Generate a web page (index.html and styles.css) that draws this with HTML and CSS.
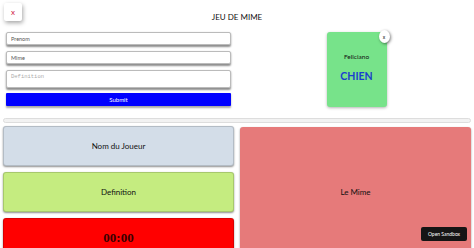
FILE: index.html
```html
<!DOCTYPE html>
<html>
<head>
<meta charset="utf-8">
<link rel="stylesheet" href="styles.css">
</head>
<body>
<header class="header">
  <button class="close-btn">x</button>
  <h1 class="title">JEU DE MIME</h1>
</header>
<section class="top">
  <form class="form">
    <input class="field" type="text" placeholder="Prenom">
    <input class="field" type="text" placeholder="Mime">
    <textarea class="field area" placeholder="Definition"></textarea>
    <button type="button" class="submit">Submit</button>
  </form>
  <div class="cards">
    <div class="card">
      <span class="card-x">x</span>
      <div class="card-name">Feliciano</div>
      <div class="card-word">CHIEN</div>
    </div>
  </div>
</section>
<div class="divider"></div>
<section class="board">
  <div class="col-left">
    <div class="box player">Nom du Joueur</div>
    <div class="box def">Definition</div>
    <div class="box timer">00:00</div>
  </div>
  <div class="box mime">Le Mime</div>
</section>
<button class="sandbox">Open Sandbox</button>
</body>
</html>
```
FILE: styles.css
```css
* { box-sizing: border-box; }
html, body { margin: 0; padding: 0; }
body {
  font-family: "Lato", "Open Sans", sans-serif;
  background: #fff;
  width: 474px;
  height: 248px;
  overflow: hidden;
  position: relative;
  color: #111;
}
.header {
  height: 30px;
  display: flex;
  align-items: center;
  justify-content: center;
  position: relative;
}
.close-btn {
  position: absolute;
  left: 4px;
  top: 3px;
  width: 18px;
  height: 18px;
  border: none;
  background: #fff;
  color: #d0204a;
  font-size: 8px;
  font-family: "Lato", sans-serif;
  padding: 0;
  box-shadow: 1px 2px 4px rgba(0,0,0,0.35);
  border-radius: 2px;
}
.title {
  margin: 0;
  font-size: 8px;
  font-weight: 400;
  padding-top: 3px;
}
.top {
  display: grid;
  grid-template-columns: 237px 237px;
  height: 84px;
}
.form {
  display: flex;
  flex-direction: column;
  padding: 2px 6px 0 6px;
  gap: 6px;
}
.field {
  width: 225px;
  height: 13px;
  border: 1px solid #bbb;
  border-radius: 2px;
  font-size: 5.5px;
  padding: 0 4px;
  font-family: "Lato", sans-serif;
  box-shadow: 0 1.5px 2px rgba(0,0,0,0.45);
  background: #fff;
  margin: 0;
}
.field::placeholder { color: #555; }
.area {
  height: 18px;
  resize: none;
  font-family: "Liberation Mono", monospace;
  padding-top: 2px;
}
.area::placeholder { color: #aaa; }
.submit {
  width: 225px;
  height: 13px;
  background: #0000ff;
  color: #fff;
  border: none;
  border-radius: 1px;
  font-size: 6px;
  font-family: "Lato", sans-serif;
  box-shadow: 0 1.5px 2px rgba(0,0,0,0.35);
  margin-top: -1px;
}
.cards {
  display: flex;
  justify-content: center;
  padding-top: 2px;
  padding-left: 2px;
}
.card {
  position: relative;
  width: 60px;
  height: 75px;
  background: #77e38a;
  border-radius: 3px;
  box-shadow: 0 1px 3px rgba(0,0,0,0.3);
  display: flex;
  flex-direction: column;
  align-items: center;
  padding-top: 21px;
}
.card-x {
  position: absolute;
  right: -3px;
  top: -2px;
  width: 11px;
  height: 13px;
  border-radius: 50%;
  background: #fff;
  box-shadow: 1px 1px 3px rgba(0,0,0,0.5);
  font-size: 5px;
  display: flex;
  align-items: center;
  justify-content: center;
}
.card-name {
  font-size: 6.5px;
  color: #111;
}
.card-word {
  margin-top: 10px;
  font-size: 10.5px;
  color: #1a3fcf;
  font-weight: 700;
}
.divider {
  margin: 4px 3px 3px 3px;
  height: 5px;
  border: 1px solid #ddd;
  background: #f2f2f2;
  border-radius: 3px;
}
.board {
  display: grid;
  grid-template-columns: 231px 231px;
  gap: 6px;
  padding: 0 3px;
}
.col-left {
  display: flex;
  flex-direction: column;
  gap: 6px;
}
.box {
  border-radius: 3px;
  display: flex;
  align-items: center;
  justify-content: center;
  font-size: 8px;
  box-shadow: 0 1px 2px rgba(0,0,0,0.45);
  border: 1px solid rgba(0,0,0,0.15);
}
.player { height: 40px; background: #d3dde8; }
.def { height: 40px; background: #c5ec80; }
.timer {
  height: 40px;
  background: #ff0000;
  font-family: "Liberation Serif", serif;
  font-weight: 700;
  font-size: 13px;
  color: #3a0000;
}
.mime {
  background: #e67a7a;
  height: 130px;
  margin-top: 1px;
  border: none;
}
.sandbox {
  position: absolute;
  right: 7px;
  bottom: 7px;
  width: 46px;
  height: 14px;
  background: #151515;
  color: #fff;
  border: none;
  border-radius: 2px;
  font-size: 5px;
  font-family: "Lato", sans-serif;
  padding: 0;
}
```
